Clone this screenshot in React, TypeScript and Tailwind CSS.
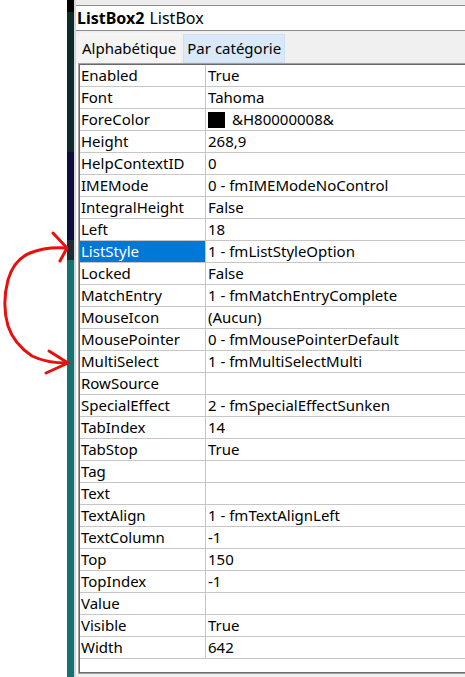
import React from "react"

type Prop = {
  name: string
  value: string
  swatch?: boolean
}

const props: Prop[] = [
  { name: "Enabled", value: "True" },
  { name: "Font", value: "Tahoma" },
  { name: "ForeColor", value: "&H80000008&", swatch: true },
  { name: "Height", value: "268,9" },
  { name: "HelpContextID", value: "0" },
  { name: "IMEMode", value: "0 - fmIMEModeNoControl" },
  { name: "IntegralHeight", value: "False" },
  { name: "Left", value: "18" },
  { name: "ListStyle", value: "1 - fmListStyleOption" },
  { name: "Locked", value: "False" },
  { name: "MatchEntry", value: "1 - fmMatchEntryComplete" },
  { name: "MouseIcon", value: "(Aucun)" },
  { name: "MousePointer", value: "0 - fmMousePointerDefault" },
  { name: "MultiSelect", value: "1 - fmMultiSelectMulti" },
  { name: "RowSource", value: "" },
  { name: "SpecialEffect", value: "2 - fmSpecialEffectSunken" },
  { name: "TabIndex", value: "14" },
  { name: "TabStop", value: "True" },
  { name: "Tag", value: "" },
  { name: "Text", value: "" },
  { name: "TextAlign", value: "1 - fmTextAlignLeft" },
  { name: "TextColumn", value: "-1" },
  { name: "Top", value: "150" },
  { name: "TopIndex", value: "-1" },
  { name: "Value", value: "" },
  { name: "Visible", value: "True" },
  { name: "Width", value: "642" },
]

const selected = "ListStyle"

// hand-drawn red arrows over the left margin
function Arrows() {
  return (
    <svg className="pointer-events-none absolute left-0 top-0" width="80" height="380" viewBox="0 0 80 380">
      <g fill="none" stroke="#e8100c" strokeWidth="3" strokeLinecap="round" strokeLinejoin="round">
        <path d="M66 248 C52 247 40 249 30 253 C20 257 12 266 8 280 C4 295 4 312 8 326 C12 338 20 348 32 356 C44 362 56 363 68 363" />
        <path d="M53 233 L67 248 L60 261" />
        <path d="M49 351 L68 363 L46 373" />
      </g>
    </svg>
  )
}

export default function App() {
  return (
    <div
      className="relative flex h-[677px] w-[465px] overflow-hidden bg-white text-black"
      style={{ fontFamily: '"Noto Sans", "Open Sans", sans-serif' }}
    >
      <div className="w-[67px] shrink-0" />

      {/* window edge behind the properties panel */}
      <div className="flex w-[7px] shrink-0 flex-col">
        <div className="h-[12px] bg-black" />
        <div className="h-[140px] bg-[#0e2a2b]" />
        <div className="h-[88px] bg-[#0c0d3c]" />
        <div className="h-[20px] bg-[#1d2b33]" />
        <div className="flex-1 bg-[#137372]" />
      </div>
      <div className="w-[2px] shrink-0 bg-[#d6d6d6]" />

      {/* properties panel */}
      <div className="flex w-[420px] shrink-0 flex-col">
        <div className="h-[6px] border-b border-[#8c8c8c] bg-[#ededed]" />
        <div className="flex h-[25px] items-center border-b border-[#8c8c8c] bg-white pl-[1px] text-[16px] leading-none">
          <span className="font-bold">ListBox2</span>
          <span className="ml-[5px]">ListBox</span>
        </div>

        <div className="flex h-[32px] items-end bg-[#f0f0f0] pl-[1px]">
          <div className="flex h-[30px] items-center bg-[#f4f4f4] px-[5px] text-[15px]">Alphabétique</div>
          <div className="ml-[2px] flex h-[29px] items-center border border-[#cfe0f2] bg-[#dae9f9] px-[3px] text-[15px]">
            Par catégorie
          </div>
        </div>

        <div className="ml-[2px] flex-1 border border-[#a0a0a0] bg-white">
          <div className="h-full border border-[#696969] border-r-0">
            {props.map((p) => {
              const isSel = p.name === selected
              return (
                <div key={p.name} className="flex h-[22px] border-b border-[#c6c6c6] text-[15px] leading-none">
                  <div
                    className={`flex w-[126px] shrink-0 items-center border-r border-[#c6c6c6] pl-[1px] ${
                      isSel ? "bg-[#0078d7] text-white" : ""
                    }`}
                  >
                    {p.name}
                  </div>
                  <div className="flex flex-1 items-center pl-[2px]">
                    {p.swatch && <span className="mr-[7px] inline-block h-[16px] w-[17px] bg-black" />}
                    {p.value}
                  </div>
                </div>
              )
            })}
          </div>
        </div>
        <div className="h-[3px] bg-[#f0f0f0]" />
      </div>

      <Arrows />
    </div>
  )
}
